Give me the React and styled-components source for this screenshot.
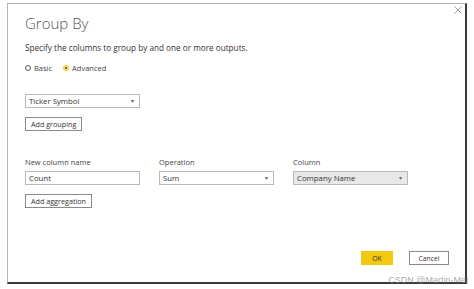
import React from "react";
import styled, { createGlobalStyle } from "styled-components";

const Global = createGlobalStyle`
    html, body {
        margin: 0;
        padding: 0;
        background: #ffffff;
        font-family: "Open Sans", "Noto Sans", sans-serif;
    }
`;

const App = () => {
    return (
        <>
            <Global />
            <Page>
                <Dialog>
                    <Close>
                        <svg width="8" height="8" viewBox="0 0 8 8">
                            <path d="M0.5 0.5 L7.5 7.5 M7.5 0.5 L0.5 7.5" stroke="#a0a0a0" strokeWidth="1" />
                        </svg>
                    </Close>
                    <Title>Group By</Title>
                    <Subtitle>Specify the columns to group by and one or more outputs.</Subtitle>
                    <RadioRow>
                        <RadioItem>
                            <Radio />
                            Basic
                        </RadioItem>
                        <RadioItem>
                            <Radio checked />
                            Advanced
                        </RadioItem>
                    </RadioRow>

                    <GroupSelect>
                        Ticker Symbol
                        <Caret>▾</Caret>
                    </GroupSelect>
                    <SmallButton>Add grouping</SmallButton>

                    <FieldRow>
                        <Field>
                            <Label>New column name</Label>
                            <Input>Count</Input>
                        </Field>
                        <Field>
                            <Label>Operation</Label>
                            <Select>
                                Sum
                                <Caret>▾</Caret>
                            </Select>
                        </Field>
                        <Field>
                            <Label>Column</Label>
                            <Select disabled>
                                Company Name
                                <Caret>▾</Caret>
                            </Select>
                        </Field>
                    </FieldRow>
                    <SmallButton>Add aggregation</SmallButton>

                    <Footer>
                        <FooterButton primary>OK</FooterButton>
                        <FooterButton>Cancel</FooterButton>
                    </Footer>
                </Dialog>
                <Watermark>CSDN @Martin-Mei</Watermark>
            </Page>
        </>
    );
};

export default App;

const Page = styled.div`
    position: relative;
    width: 474px;
    height: 289px;
    padding: 3px 0 0 7px;
    box-sizing: border-box;
    overflow: hidden;
`;

const Dialog = styled.div`
    position: relative;
    width: 460px;
    height: 281px;
    box-sizing: border-box;
    border-top: 1px solid #b4b4b4;
    border-left: 1px solid #b4b4b4;
    border-right: 2px solid #3a3a3a;
    border-bottom: 2px solid #3a3a3a;
    padding: 9px 0 0 17px;
    display: flex;
    flex-direction: column;
    align-items: flex-start;
    color: #333;
`;

const Close = styled.div`
    position: absolute;
    top: 2px;
    right: 3px;
    width: 8px;
    height: 8px;
    display: flex;
`;

const Title = styled.div`
    font-size: 15px;
    font-weight: 300;
    color: #555;
    line-height: 20px;
`;

const Subtitle = styled.div`
    margin-top: 9px;
    font-size: 8.2px;
    line-height: 11px;
    color: #333;
`;

const RadioRow = styled.div`
    margin-top: 10px;
    display: flex;
    gap: 11px;
    font-size: 7.5px;
    line-height: 10px;
    color: #444;
`;

const RadioItem = styled.div`
    display: flex;
    align-items: center;
    gap: 3px;
`;

const Radio = styled.span`
    width: 4px;
    height: 4px;
    border-radius: 50%;
    border: 1px solid ${(p) => (p.checked ? "#f2c811" : "#555")};
    background: ${(p) => (p.checked ? "radial-gradient(circle, #666 0 1px, #fbe58a 1.5px)" : "#fff")};
`;

const Select = styled.div`
    width: 115px;
    height: 14px;
    box-sizing: border-box;
    border: 1px solid #b8b8b8;
    background: ${(p) => (p.disabled ? "#e8e8e8" : "#fff")};
    display: flex;
    align-items: center;
    justify-content: space-between;
    padding: 0 5px 0 3px;
    font-size: 7.8px;
    color: #333;
`;

const GroupSelect = styled(Select)`
    margin-top: 21px;
`;

const Caret = styled.span`
    font-size: 6px;
    color: #666;
`;

const Input = styled.div`
    width: 115px;
    height: 14px;
    box-sizing: border-box;
    border: 1px solid #b8b8b8;
    display: flex;
    align-items: center;
    padding: 0 3px;
    font-size: 7.8px;
    color: #333;
`;

const SmallButton = styled.div`
    margin-top: 9px;
    height: 14px;
    box-sizing: border-box;
    border: 1px solid #8a8a8a;
    padding: 0 5px;
    display: flex;
    align-items: center;
    font-size: 7.2px;
    color: #333;
`;

const FieldRow = styled.div`
    margin-top: 26px;
    display: flex;
    gap: 19px;
`;

const Field = styled.div`
    display: flex;
    flex-direction: column;
    gap: 4px;
`;

const Label = styled.div`
    font-size: 7.5px;
    line-height: 10px;
    color: #444;
`;

const Footer = styled.div`
    margin-top: 43px;
    align-self: flex-end;
    margin-right: 16px;
    display: flex;
    gap: 16px;
`;

const FooterButton = styled.div`
    width: ${(p) => (p.primary ? "32px" : "40px")};
    height: 14px;
    box-sizing: border-box;
    border: 1px solid ${(p) => (p.primary ? "#f2c811" : "#8a8a8a")};
    background: ${(p) => (p.primary ? "#f2c811" : "#fff")};
    display: flex;
    align-items: center;
    justify-content: center;
    font-size: 6.8px;
    color: #333;
`;

const Watermark = styled.div`
    position: absolute;
    right: 6px;
    bottom: 4px;
    font-family: "Liberation Sans", sans-serif;
    font-size: 9px;
    line-height: 10px;
    color: rgba(130, 130, 130, 0.7);
`;
